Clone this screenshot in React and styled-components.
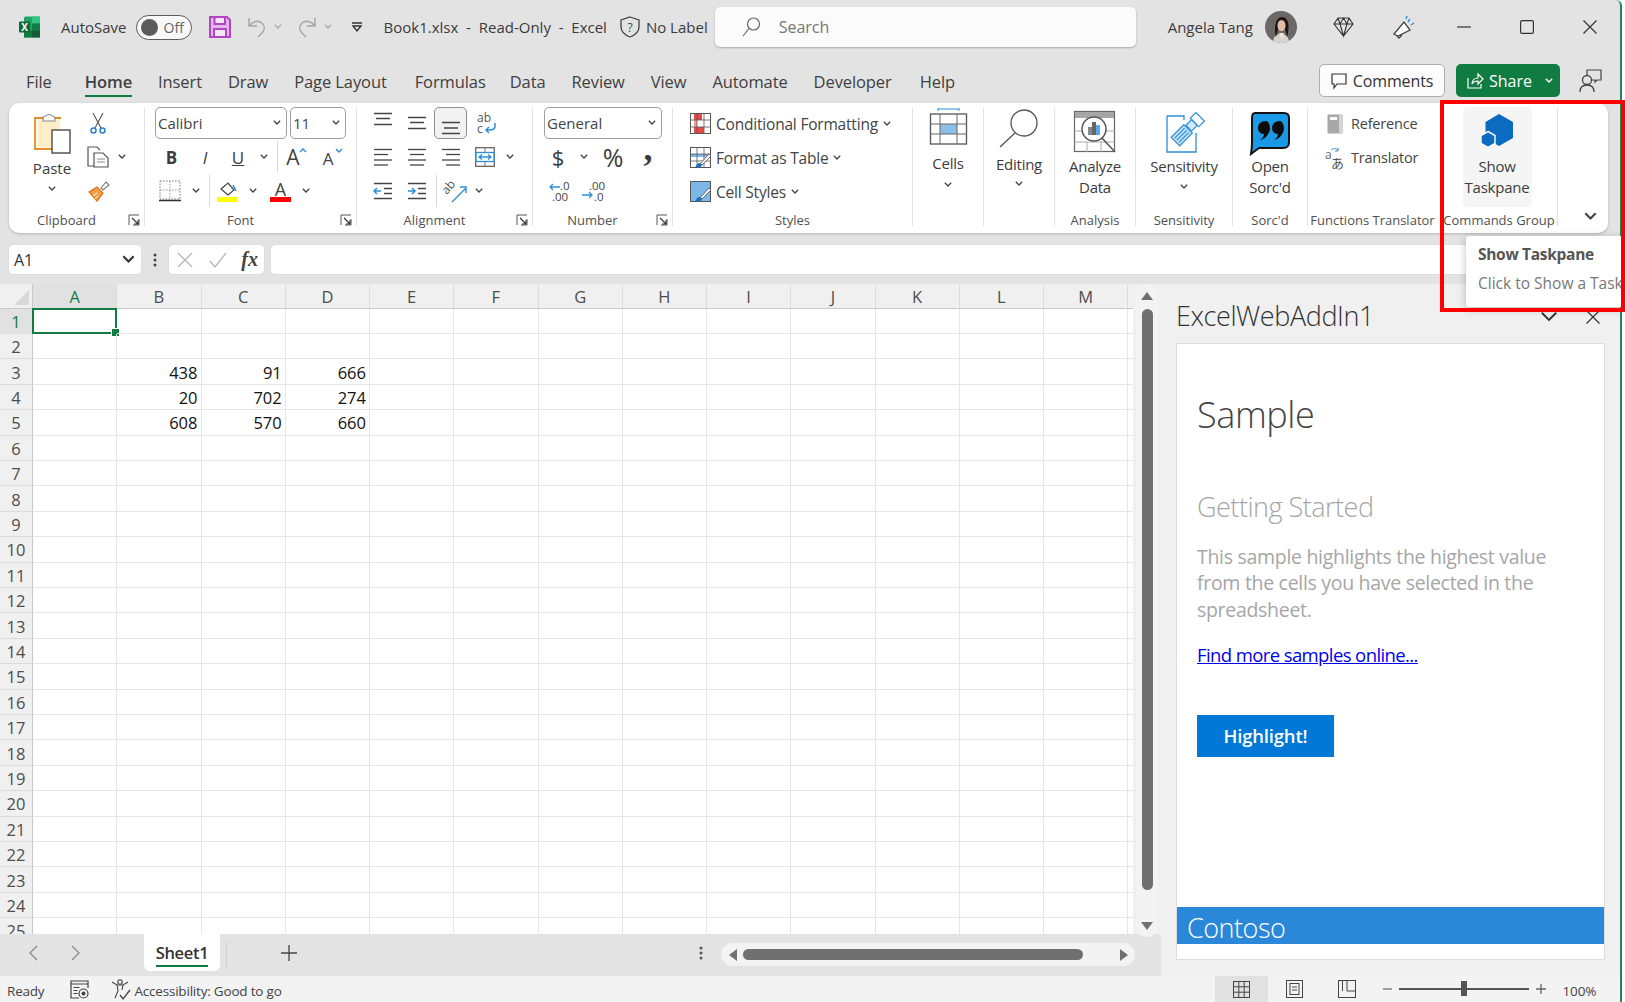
import React from "react";
import styled, { createGlobalStyle } from "styled-components";

const FONT = `"Open Sans", "Noto Sans", sans-serif`;

const GlobalStyle = createGlobalStyle`
  html, body { margin: 0; padding: 0; background: #fff; }
  body { font-family: ${FONT}; color: #333; overflow: hidden; }
  * { box-sizing: border-box; }
  svg { display: block; flex: none; overflow: visible; }
`;

const Page = styled.div`
  position: relative;
  width: 1625px;
  height: 1002px;
  overflow: hidden;
`;

const Window = styled.div`
  width: 1622px;
  height: 1002px;
  background: #e3e3e3;
  border-right: 2px solid #1f8a55;
  border-top-right-radius: 6px;
  display: flex;
  flex-direction: column;
`;

/* ---------- title bar ---------- */
const TitleBar = styled.div`
  height: 54px;
  display: flex;
  align-items: center;
  padding-left: 19px;
  font-size: 15px;
  color: #3b3b3b;
  white-space: pre;
`;

const Gap = styled.div`
  flex: none;
  width: ${p => p.$w}px;
`;

const Toggle = styled.div`
  width: 56px;
  height: 25px;
  border: 1.5px solid #5a5a5a;
  border-radius: 13px;
  background: #f8f8f8;
  display: flex;
  align-items: center;
  padding-left: 4px;
  gap: 6px;
  font-size: 14px;
  color: #666;
  &::before {
    content: "";
    width: 17px;
    height: 17px;
    border-radius: 50%;
    background: #5c5c5c;
  }
`;

const SearchBox = styled.div`
  width: 421px;
  height: 40px;
  margin-top: -1px;
  background: #fbfbfb;
  border-radius: 5px;
  box-shadow: 0 1px 2px rgba(0, 0, 0, 0.25);
  display: flex;
  align-items: center;
  padding-left: 27px;
  gap: 18px;
  font-size: 16px;
  color: #777;
`;

/* ---------- tabs ---------- */
const TabRow = styled.div`
  height: 49px;
  display: flex;
  align-items: flex-start;
  padding: 10px 19px 0 26px;
`;

const Tab = styled.div`
  height: 33px;
  margin-right: ${p => p.$mr ?? 26}px;
  font-size: 16.5px;
  letter-spacing: -0.1px;
  line-height: 36px;
  color: #404040;
  font-weight: ${p => (p.$active ? 600 : 400)};
  border-bottom: ${p => (p.$active ? "2.5px solid #107c41" : "none")};
`;

const TabActions = styled.div`
  margin-left: auto;
  display: flex;
  align-items: center;
  height: 33px;
`;

const CommentsBtn = styled.div`
  width: 126px;
  height: 33px;
  background: #fcfcfc;
  border: 1px solid #adadad;
  border-radius: 5px;
  display: flex;
  align-items: center;
  justify-content: center;
  gap: 6px;
  font-size: 16px;
  letter-spacing: -0.1px;
  color: #333;
`;

const ShareBtn = styled.div`
  width: 104px;
  height: 33px;
  margin: 0 19px 0 11px;
  background: #107c41;
  border-radius: 5px;
  display: flex;
  align-items: center;
  padding-left: 11px;
  gap: 6px;
  font-size: 16px;
  color: #fff;
`;

/* ---------- ribbon ---------- */
const Ribbon = styled.div`
  height: 130px;
  margin: 0 12px 0 9px;
  background: #fff;
  border-radius: 10px;
  box-shadow: 0 1px 3px rgba(0, 0, 0, 0.22);
  display: flex;
  flex: none;
`;

const Group = styled.div`
  position: relative;
  flex: none;
  width: ${p => p.$w}px;
  height: 118px;
  margin-top: 5px;
  border-right: ${p => (p.$plain ? "none" : "1px solid #e2e2e2")};
  display: flex;
  flex-direction: column;
`;

const GroupBody = styled.div`
  flex: 1;
  min-height: 0;
  margin-top: -1px;
  display: flex;
  flex-direction: ${p => p.$dir || "column"};
  gap: 2px;
  padding-left: ${p => p.$pl || 0}px;
`;

const GroupLabel = styled.div`
  height: 10px;
  line-height: 10px;
  margin-bottom: 1px;
  padding-right: ${p => p.$pr || 0}px;
  padding-left: ${p => p.$pleft || 0}px;
  text-align: center;
  font-size: 13px;
  color: #505050;
  white-space: nowrap;
`;

const Launcher = styled.div`
  position: absolute;
  right: 4px;
  bottom: 0;
`;

const ToolRow = styled.div`
  height: 32px;
  flex: none;
  display: flex;
  align-items: center;
  padding-left: ${p => p.$pl || 0}px;
`;

const Tool = styled.div`
  width: ${p => p.$w}px;
  height: 32px;
  flex: none;
  display: flex;
  align-items: center;
  justify-content: center;
  border-radius: 5px;
  font-size: ${p => p.$fs || 17}px;
  color: #3c3c3c;
  ${p => p.$on && "background: #f2f2f2; border: 1.5px solid #8f8f8f;"}
`;

const CommaMark = styled.span`
  font-family: "Liberation Serif", serif;
  font-weight: 700;
  font-size: 36px;
  line-height: 1;
  transform: translateY(-9px);
`;

const ToolSep = styled.div`
  width: 1px;
  height: 32px;
  flex: none;
  background: #d8d8d8;
  margin: 0 ${p => p.$mr || 0}px 0 ${p => p.$ml || 0}px;
`;

const Select = styled.div`
  width: ${p => p.$w}px;
  height: 32px;
  flex: none;
  margin-right: 3px;
  border: 1px solid #9e9e9e;
  border-radius: 5px;
  padding: 0 5px 0 2px;
  display: flex;
  align-items: center;
  justify-content: space-between;
  font-size: 15px;
  color: #444;
`;

const ClipCol = styled.div`
  display: flex;
  flex-direction: column;
  gap: 2px;
`;

const PasteBtn = styled.div`
  width: 66px;
  padding-top: 6px;
  display: flex;
  flex-direction: column;
  align-items: center;
  font-size: 15px;
  color: #3c3c3c;
  line-height: 20px;
`;

const PasteLabel = styled.div`
  margin: 4px 0 8px;
`;

const StyleRow = styled.div`
  height: 32px;
  flex: none;
  display: flex;
  align-items: center;
  padding: 1px 0 0 ${p => p.$pl || 17}px;
  gap: ${p => p.$gap || 5}px;
  font-size: ${p => p.$fs || 15.5}px;
  letter-spacing: -0.2px;
  color: #444;
  white-space: nowrap;
`;

const BigBtn = styled.div`
  width: ${p => p.$w || 70}px;
  height: ${p => (p.$h ? p.$h + "px" : "auto")};
  margin: 0 auto;
  padding-top: ${p => p.$pt ?? 4}px;
  display: flex;
  flex-direction: column;
  align-items: center;
  gap: ${p => p.$gap ?? 3}px;
  font-size: 15px;
  letter-spacing: -0.25px;
  line-height: 21px;
  color: #3c3c3c;
  text-align: center;
  border-radius: 5px;
  ${p => p.$hover && "background: #f5f5f5;"}
`;

const BtnChev = styled.div`
  margin-top: ${p => p.$mt || 0}px;
`;

const Collapse = styled.div`
  flex: 1;
  display: flex;
  align-items: flex-end;
  justify-content: center;
  padding: 0 0 13px 14px;
`;

/* ---------- formula bar ---------- */
const FormulaBar = styled.div`
  height: 29px;
  margin: 12px 10px 10px 9px;
  display: flex;
  align-items: stretch;
  flex: none;
`;

const FormulaBox = styled.div`
  background: #fff;
  border-radius: 4px;
  box-shadow: 0 0 1px rgba(0, 0, 0, 0.2);
  display: flex;
  align-items: center;
  flex: ${p => (p.$w ? "none" : "1")};
  width: ${p => (p.$w ? p.$w + "px" : "auto")};
  padding: ${p => p.$pad || "0"};
  justify-content: space-between;
  font-size: 16px;
  color: #333;
`;

const Kebab = styled.div`
  width: 28px;
  display: flex;
  align-items: center;
  justify-content: center;
`;

const FxMark = styled.span`
  font-family: "Liberation Serif", serif;
  font-style: italic;
  font-weight: 700;
  font-size: 20px;
  color: #444;
`;

/* ---------- workspace ---------- */
const Workspace = styled.div`
  flex: 1;
  min-height: 0;
  display: flex;
`;

const SheetArea = styled.div`
  width: 1161px;
  flex: none;
  display: flex;
  flex-direction: column;
`;

const SheetTop = styled.div`
  height: 650px;
  flex: none;
  display: flex;
  background: #f0f0f0;
`;

const GridWrap = styled.div`
  width: 1133px;
  overflow: hidden;
  background: #fff;
`;

const Grid = styled.div`
  display: grid;
  grid-template-columns: 33px repeat(14, 84.25px);
  grid-template-rows: 24.5px;
  grid-auto-rows: 25.42px;
  font-size: 16.5px;
`;

const CornerCell = styled.div`
  background: #f0f0f0;
  border-right: 1px solid #c9c9c9;
  border-bottom: 1px solid #c9c9c9;
  display: flex;
  align-items: flex-end;
  justify-content: flex-end;
  padding: 0 3px 3px 0;
  &::after {
    content: "";
    border-style: solid;
    border-width: 0 0 15px 15px;
    border-color: transparent transparent #d9d9d9 transparent;
  }
`;

const ColHead = styled.div`
  background: ${p => (p.$sel ? "#e1e1e1" : "#f0f0f0")};
  color: ${p => (p.$sel ? "#107c41" : "#4d4d4d")};
  border-right: 1px solid #dcdcdc;
  border-bottom: 1px solid #c9c9c9;
  padding-top: 1px;
  display: flex;
  align-items: center;
  justify-content: center;
`;

const RowHead = styled.div`
  background: ${p => (p.$sel ? "#e1e1e1" : "#f0f0f0")};
  color: ${p => (p.$sel ? "#107c41" : "#4d4d4d")};
  border-right: 1px solid #c9c9c9;
  border-bottom: 1px solid #dcdcdc;
  padding-top: 1px;
  display: flex;
  align-items: center;
  justify-content: center;
`;

const Cell = styled.div`
  position: relative;
  border-right: 1px solid #e6e6e6;
  border-bottom: 1px solid #e6e6e6;
  padding: 1px 3px 0 0;
  display: flex;
  align-items: center;
  justify-content: flex-end;
  color: #111;
`;

const Selection = styled.div`
  position: absolute;
  inset: -1px -1px -1px -1px;
  border: 2px solid #107c41;
  &::after {
    content: "";
    position: absolute;
    right: -4px;
    bottom: -4px;
    width: 7px;
    height: 7px;
    background: #107c41;
    outline: 1px solid #fff;
  }
`;

const VScroll = styled.div`
  width: 22px;
  margin-left: 3px;
  height: 653px;
  background: #f3f3f3;
  border-radius: 11px;
  flex: none;
  display: flex;
  flex-direction: column;
  align-items: center;
  padding: 7px 0 6px;
  z-index: 1;
`;

const VThumb = styled.div`
  width: 11px;
  height: 581px;
  margin: 8px 0 auto;
  background: #707070;
  border-radius: 6px;
`;

const TabBar = styled.div`
  height: 42px;
  flex: none;
  display: flex;
  align-items: flex-start;
  background: #e3e3e3;
`;

const NavBtn = styled.div`
  width: ${p => p.$w}px;
  height: 37px;
  flex: none;
  display: flex;
  align-items: center;
  justify-content: center;
`;

const SheetTab = styled.div`
  width: 76px;
  height: 37px;
  background: #fff;
  border-radius: 0 0 6px 6px;
  display: flex;
  justify-content: center;
  font-size: 16.5px;
  font-weight: 600;
  letter-spacing: -0.3px;
  color: #333;
  line-height: 37px;
`;

const SheetName = styled.div`
  height: 33px;
  border-bottom: 2.5px solid #107c41;
`;

const TabSep = styled.div`
  width: 1px;
  height: 26px;
  margin: 8px 0 0 6px;
  background: #cfcfcf;
`;

const HScroll = styled.div`
  width: 414px;
  height: 23px;
  margin: 9px 26px 0 auto;
  background: #f3f3f3;
  border-radius: 12px;
  display: flex;
  align-items: center;
  padding: 0 6px 0 7px;
`;

const HThumb = styled.div`
  width: 340px;
  height: 11px;
  margin: 0 auto 0 5px;
  background: #707070;
  border-radius: 6px;
`;

/* ---------- task pane ---------- */
const Pane = styled.div`
  flex: 1;
  background: #f0f0f0;
  display: flex;
  flex-direction: column;
  padding: 0 15px 16px;
`;

const PaneHead = styled.div`
  height: 59px;
  flex: none;
  display: flex;
  align-items: center;
  padding: 3px 5px 0 0;
`;

const PaneTitle = styled.div`
  flex: 1;
  font-size: 27px;
  font-weight: 300;
  letter-spacing: -0.4px;
  color: #333;
`;

const PaneIcons = styled.div`
  display: flex;
  align-items: center;
  gap: 28px;
  margin-top: 4px;
`;

const PaneBox = styled.div`
  flex: 1;
  background: #fff;
  border: 1px solid #dedede;
  display: flex;
  flex-direction: column;
`;

const PaneBody = styled.div`
  flex: 1;
  padding: 46px 20px 0;
`;

const Heading = styled.div`
  font-size: 36px;
  line-height: 50px;
  font-weight: 300;
  letter-spacing: -0.4px;
  color: #444;
`;

const SubHeading = styled.div`
  margin-top: 50px;
  font-size: 27px;
  line-height: 34px;
  font-weight: 300;
  letter-spacing: -0.5px;
  color: #a6a6a6;
`;

const Body = styled.div`
  margin-top: 20px;
  font-size: 19.5px;
  line-height: 26.3px;
  letter-spacing: -0.3px;
  color: #a6a6a6;
  width: 365px;
`;

const Link = styled.a`
  display: block;
  margin-top: 19px;
  font-size: 18.5px;
  line-height: 26px;
  letter-spacing: -0.6px;
  color: #0000ee;
  text-decoration: underline;
`;

const Action = styled.div`
  width: 137px;
  height: 42px;
  margin-top: 47px;
  background: #0078d7;
  color: #fff;
  font-size: 18.5px;
  font-weight: 600;
  letter-spacing: -0.2px;
  display: flex;
  align-items: center;
  justify-content: center;
`;

const Brand = styled.div`
  height: 37px;
  margin-bottom: 15px;
  padding-left: 10px;
  background: #2b88d8;
  color: #fff;
  font-size: 27px;
  font-weight: 300;
  letter-spacing: -0.5px;
  line-height: 42px;
`;

/* ---------- status bar ---------- */
const StatusBar = styled.div`
  height: 26px;
  flex: none;
  background: #f3f3f3;
  display: flex;
  align-items: center;
  padding-left: 7px;
  font-size: 13.5px;
  letter-spacing: -0.2px;
  color: #444;
`;

const StatusText = styled.span`
  padding-top: 3px;
`;

const ViewBtn = styled.div`
  width: ${p => p.$w || 53}px;
  height: 26px;
  flex: none;
  display: flex;
  align-items: center;
  justify-content: center;
  background: ${p => (p.$on ? "#e1e1e1" : "transparent")};
`;

const ZoomTrack = styled.div`
  position: relative;
  width: 130px;
  height: 1.5px;
  margin: 0 7px;
  background: #555;
`;

const ZoomThumb = styled.div`
  position: absolute;
  left: 62px;
  top: -7px;
  width: 6px;
  height: 15px;
  background: #555;
`;

/* ---------- overlays ---------- */
const Tooltip = styled.div`
  position: absolute;
  left: 1466px;
  top: 236px;
  width: 156px;
  height: 71px;
  padding: 4px 0 0 12px;
  background: #fff;
  border-radius: 3px 0 0 3px;
  box-shadow: 0 2px 8px rgba(0, 0, 0, 0.25);
  overflow: hidden;
  white-space: nowrap;
  font-size: 15.5px;
  line-height: 30px;
  color: #777;
`;

const TipTitle = styled.div`
  line-height: 28px;
  font-weight: 700;
  letter-spacing: -0.3px;
  color: #555;
`;

const RedFrame = styled.div`
  position: absolute;
  left: 1440px;
  top: 100px;
  width: 185px;
  height: 212px;
  border: 4px solid #ff0000;
  pointer-events: none;
`;

/* ---------- icons ---------- */
const Chev = ({ s = 8, c = "#444", w = 1.4 }) => (
  <svg width={s} height={s * 0.65} viewBox="0 0 10 6.5">
    <path d="M1 1l4 4 4-4" fill="none" stroke={c} strokeWidth={w * 1.2} />
  </svg>
);

const Svg = ({ w = 20, h = 20, children, ...rest }) => (
  <svg width={w} height={h} viewBox={`0 0 ${w} ${h}`} {...rest}>{children}</svg>
);

const ExcelLogo = () => (
  <Svg w={21} h={22}>
    <rect x="5" y="0.500" width="16" height="21" rx="1.500" fill="#21a366" />
    <rect x="13" y="0.500" width="8" height="7" fill="#33c481" />
    <rect x="13" y="7.500" width="8" height="7" fill="#107c41" />
    <rect x="13" y="14.500" width="8" height="7" fill="#185c37" />
    <rect x="5" y="14.500" width="8" height="7" fill="#107c41" />
    <rect x="0" y="5.500" width="11" height="11" rx="1" fill="#0e6b38" />
    <text x="5.500" y="14.500" textAnchor="middle" fontSize="10" fontWeight="700" fill="#fff" fontFamily="Open Sans">X</text>
  </Svg>
);

const SaveIcon = () => (
  <Svg w={22} h={22}>
    <path d="M1 1h17l3 3v17H1z" fill="#e7b5ee" stroke="#b146c2" strokeWidth="2" />
    <rect x="5.500" y="1" width="10.500" height="7" fill="#f7e3fa" stroke="#b146c2" strokeWidth="2" />
    <rect x="5" y="13" width="12" height="8" fill="#f7e3fa" stroke="#b146c2" strokeWidth="2" />
  </Svg>
);

const UndoIcon = ({ flip }) => (
  <Svg w={20} h={22} transform={flip ? "scale(-1 1)" : undefined}>
    <path d="M2 2v8h8M2.500 9.500C6 5 11 4 15 7c3 3 3 7 0 10l-4 4" fill="none" stroke="#a6a6a6" strokeWidth="1.500" />
  </Svg>
);

const QatIcon = () => (
  <Svg w={10} h={10}>
    <path d="M0 1h10" stroke="#333" strokeWidth="1.500" />
    <path d="M1 4h8L5 9z" fill="none" stroke="#333" strokeWidth="1.400" />
  </Svg>
);

const ShieldIcon = () => (
  <Svg w={20} h={22}>
    <path d="M10 1l9 3v7c0 5-4 8-9 10C5 19 1 16 1 11V4z" fill="none" stroke="#444" strokeWidth="1.300" />
    <text x="10" y="15.500" textAnchor="middle" fontSize="12" fill="#444" fontFamily="Open Sans">?</text>
  </Svg>
);

const SearchIcon = () => (
  <Svg w={19} h={20}>
    <circle cx="11.500" cy="7" r="6" fill="none" stroke="#666" strokeWidth="1.200" />
    <path d="M7 11.500L1 19" stroke="#666" strokeWidth="1.200" />
  </Svg>
);

const Avatar = () => (
  <Svg w={32} h={32}>
    <defs><clipPath id="av"><circle cx="16" cy="16" r="16" /></clipPath></defs>
    <g clipPath="url(#av)">
      <rect width="32" height="32" fill="#6b6866" />
      <path d="M8 32c0-6 3-9 8-9s8 3 8 9z" fill="#d9d4cc" />
      <path d="M11 26c-2-8-1-20 6-20s8 10 5 20l-2-8h-7z" fill="#1d1614" />
      <ellipse cx="16.500" cy="14.500" rx="4" ry="5.500" fill="#e5bda4" />
      <path d="M14 22h5l-2 6z" fill="#f1e6df" />
    </g>
  </Svg>
);

const DiamondIcon = () => (
  <Svg w={21} h={20}>
    <path d="M5 1h11l4 6-9.500 12L1 7zM1 7h19M7 7l3.500 12L14 7M5 1l2 6 3.500-6 3.500 6 2-6" fill="none" stroke="#333" strokeWidth="1.100" />
  </Svg>
);

const MegaIcon = () => (
  <Svg w={22} h={23}>
    <path d="M2 18L12 6l6 8-12 6zM5 20l2 2 3-3" fill="#fff" stroke="#444" strokeWidth="1.300" />
    <path d="M16 6l2-3M19 9l3-2M14 3l1-3" stroke="#2e8fd6" strokeWidth="1.400" />
  </Svg>
);

const CloseIcon = ({ s = 14, w = 1.2, c = "#333" }) => (
  <Svg w={s} h={s}>
    <path d={`M0.500 0.500L${s - 0.5} ${s - 0.5}M${s - 0.5} 0.500L0.500 ${s - 0.5}`} stroke={c} strokeWidth={w} />
  </Svg>
);

const CommentIcon = () => (
  <Svg w={16} h={16}>
    <path d="M1 1h14v10H6l-3 4v-4H1z" fill="none" stroke="#333" strokeWidth="1.200" />
  </Svg>
);

const ShareIcon = () => (
  <Svg w={16} h={17}>
    <path d="M1 6v10h13v-4" fill="none" stroke="#fff" strokeWidth="1.200" />
    <path d="M5 12c0-4 3-6 6-6V2l5 5-5 5V9c-3 0-5 1-6 3z" fill="none" stroke="#fff" strokeWidth="1.200" />
  </Svg>
);

const CoauthIcon = () => (
  <Svg w={22} h={23}>
    <path d="M8 6V1h14v10h-4l-2 2v-2h-3" fill="none" stroke="#444" strokeWidth="1.200" />
    <circle cx="8" cy="11" r="4.500" fill="#e3e3e3" stroke="#444" strokeWidth="1.300" />
    <path d="M1 23c0-5 3-7 7-7s7 2 7 7" fill="none" stroke="#444" strokeWidth="1.300" />
  </Svg>
);

const PasteIcon = () => (
  <Svg w={37} h={41}>
    <path d="M27 5H1v31h17" fill="#fff6e0" stroke="#e88c2d" strokeWidth="1.800" />
    <rect x="4" y="8" width="22" height="26" fill="#fdeec6" />
    <path d="M9 5c0-2 2-2 3-2 1-2 5-2 6 0 1 0 3 0 3 2v3H9z" fill="#fff" stroke="#888" strokeWidth="1.100" />
    <rect x="18" y="17" width="18" height="23" fill="#fff" stroke="#555" strokeWidth="1.500" />
  </Svg>
);

const CutIcon = () => (
  <Svg w={16} h={22}>
    <path d="M3 1l8 15M13 1L5 16" stroke="#555" strokeWidth="1.100" />
    <circle cx="3.500" cy="18.500" r="2.500" fill="none" stroke="#2a80c9" strokeWidth="1.500" />
    <circle cx="12.500" cy="18.500" r="2.500" fill="none" stroke="#2a80c9" strokeWidth="1.500" />
  </Svg>
);

const CopyIcon = () => (
  <Svg w={22} h={22}>
    <path d="M7 20H1V1h9l3 3" fill="none" stroke="#555" strokeWidth="1.200" />
    <path d="M7 7h9l5 5v9H7z" fill="#fff" stroke="#555" strokeWidth="1.200" />
    <path d="M10 13h8M10 16h8" stroke="#888" strokeWidth="1" />
  </Svg>
);

const BrushIcon = () => (
  <Svg w={21} h={21}>
    <path d="M13 7l5-6 3 3-6 5z" fill="#fff" stroke="#777" strokeWidth="1.100" />
    <path d="M1 11l8-5 6 6-6 8z" fill="#f3a14c" stroke="#e0701a" strokeWidth="1.200" />
    <path d="M5 15l4-3M7 18l3-3" stroke="#fff" strokeWidth="1" />
  </Svg>
);

const LauncherIcon = () => (
  <Svg w={12} h={12}>
    <path d="M1 11V1h10M11 5v6H5" fill="none" stroke="#555" strokeWidth="1" />
    <path d="M4 4l6 6M10 6v4H6" fill="none" stroke="#333" strokeWidth="1.200" />
  </Svg>
);

const BorderIcon = () => (
  <Svg w={22} h={22}>
    <rect x="1" y="1" width="20" height="18" fill="none" stroke="#777" strokeWidth="1" strokeDasharray="1.500 1.500" />
    <path d="M11 1v18M1 10h20" stroke="#999" strokeWidth="1" strokeDasharray="1.500 1.500" />
    <path d="M0 20.500h22" stroke="#333" strokeWidth="1.500" />
  </Svg>
);

const FillIcon = () => (
  <Svg w={22} h={22}>
    <path d="M4 9l7-6 6 7-6 5z" fill="#fff" stroke="#444" strokeWidth="1.200" />
    <path d="M16 5l3 6" stroke="#2e8fd6" strokeWidth="1.600" />
    <rect x="0" y="17" width="21" height="5" fill="#ffff00" />
  </Svg>
);

const ColorA = () => (
  <Svg w={22} h={22}>
    <text x="10.500" y="15.500" textAnchor="middle" fontSize="18" fill="#444" fontFamily="Open Sans">A</text>
    <rect x="0" y="17" width="21" height="5" fill="#ff0000" />
  </Svg>
);

const GrowA = ({ down }) => (
  <Svg w={22} h={22}>
    <text x={down ? 7 : 8} y="19" textAnchor="middle" fontSize={down ? 17 : 21} fill="#444" fontFamily="Open Sans">A</text>
    <path d={down ? "M15 3l3 3 3-3" : "M15 6l3-3 3 3"} fill="none" stroke="#2e8fd6" strokeWidth="1.400" />
  </Svg>
);

const VAlign = ({ at }) => {
  const ys = { top: [6.5, 11.5, 17.5], mid: [10.5, 15.5, 21.5], bot: [15.5, 21, 26.5] }[at];
  return (
    <Svg w={20} h={32}>
      <path d={`M1 ${ys[0]}H19M3 ${ys[1]}H17M1 ${ys[2]}H19`} stroke="#444" strokeWidth="1.300" fill="none" />
    </Svg>
  );
};

const HAlign = ({ at }) => {
  const [a, b] = at === "left" ? [1, 15] : at === "right" ? [5, 19] : [3, 17];
  return (
    <Svg w={20} h={18}>
      {[1.5, 6.5, 12, 17].map((y, i) => (
        <path key={i} d={i % 2 ? `M${a} ${y}H${b}` : `M1 ${y}H19`} stroke="#444" strokeWidth="1.300" />
      ))}
    </Svg>
  );
};

const WrapIcon = () => (
  <Svg w={20} h={22}>
    <text x="0" y="10" fontSize="12" fill="#555" fontFamily="Open Sans">ab</text>
    <text x="0" y="21" fontSize="12" fill="#555" fontFamily="Open Sans">c</text>
    <path d="M18 11v3c0 4-3 4-9 4M12 15l-3 3 3 3" fill="none" stroke="#2e8fd6" strokeWidth="1.500" />
  </Svg>
);

const MergeIcon = () => (
  <Svg w={20} h={20}>
    <rect x="0.700" y="0.700" width="18.600" height="18.600" fill="#fff" stroke="#666" strokeWidth="1.300" />
    <path d="M10 1v4M10 15v4" stroke="#777" strokeWidth="1" />
    <rect x="1" y="5.500" width="18" height="9" fill="#fff" stroke="#2e8fd6" strokeWidth="1.300" />
    <path d="M4 10h12M7 7.500L4 10l3 2.500M13 7.500l3 2.500-3 2.500" fill="none" stroke="#2e8fd6" strokeWidth="1.300" />
  </Svg>
);

const IndentIcon = ({ out }) => (
  <Svg w={20} h={18}>
    <path d="M1 1.500h18M1 16.500h18M11 6.500h8M11 11.500h8" stroke="#444" strokeWidth="1.300" />
    <path d={out ? "M1 9h7M4 6L1 9l3 3" : "M1 9h7M5 6l3 3-3 3"} fill="none" stroke="#2e8fd6" strokeWidth="1.500" />
  </Svg>
);

const OrientIcon = () => (
  <Svg w={22} h={22}>
    <text x="2" y="15" fontSize="12" fill="#555" fontFamily="Open Sans" transform="rotate(-50 2 15)">ab</text>
    <path d="M7 22L21 8M15 7h6v6" fill="none" stroke="#2e8fd6" strokeWidth="1.400" />
  </Svg>
);

const DecIcon = ({ more }) => (
  <Svg w={22} h={22}>
    {more ? (
      <>
        <text x="7" y="10" fontSize="11.500" fill="#444" fontFamily="Open Sans">.00</text>
        <text x="12" y="21" fontSize="11.500" fill="#444" fontFamily="Open Sans">.0</text>
        <path d="M0 15h10M7 12l3 3-3 3" fill="none" stroke="#2e8fd6" strokeWidth="1.300" />
      </>
    ) : (
      <>
        <text x="11" y="10" fontSize="11.500" fill="#444" fontFamily="Open Sans">.0</text>
        <text x="3" y="21" fontSize="11.500" fill="#444" fontFamily="Open Sans">.00</text>
        <path d="M11 7H1M4 4L1 7l3 3" fill="none" stroke="#2e8fd6" strokeWidth="1.300" />
      </>
    )}
  </Svg>
);

const CfIcon = () => (
  <Svg w={21} h={21}>
    <rect x="0.500" y="0.500" width="20" height="20" fill="#fff" stroke="#555" strokeWidth="1" />
    <rect x="4" y="1" width="8" height="6" fill="#e84a4a" />
    <rect x="4" y="7" width="3" height="7" fill="#f59a9a" />
    <rect x="4" y="14" width="10" height="6" fill="#e84a4a" />
    <path d="M7 0.500v20M14 0.500v20M0.500 7h20M0.500 14h20" stroke="#555" strokeWidth="0.800" fill="none" />
  </Svg>
);

const FatIcon = ({ full }) => (
  <Svg w={21} h={21}>
    <rect x="0.500" y="0.500" width="20" height="20" fill="#fff" stroke="#555" strokeWidth="1" />
    <rect x="1" y={full ? 1 : 7} width="19" height={full ? 19 : 3} fill="#7db7e8" />
    {!full && <path d="M7 0.500v20M14 0.500v20M0.500 7h20M0.500 14h20" stroke="#555" strokeWidth="0.800" />}
    <path d="M10 17l9-10 2 2-9 9z" fill="#fff" stroke="#666" strokeWidth="1" />
    <path d="M5 20c2-1 1-4 5-4l2 2c0 2-3 3-7 2z" fill="#1a6fc4" />
  </Svg>
);

const CellsIcon = () => (
  <Svg w={37} h={37}>
    <path d="M8 1h21M8 0v3M29 0v3" stroke="#2e8fd6" strokeWidth="1" />
    <rect x="0.500" y="6" width="36" height="30" fill="#fff" stroke="#555" strokeWidth="1.300" />
    <rect x="10" y="16" width="17" height="10" fill="#8ac0ea" />
    <path d="M10 6v30M27 6v30M0.500 16h36M0.500 26h36" stroke="#666" strokeWidth="1" fill="none" />
  </Svg>
);

const EditingIcon = () => (
  <Svg w={40} h={40}>
    <circle cx="25" cy="15" r="13" fill="#fff" stroke="#555" strokeWidth="1.300" />
    <path d="M16 25L1 39" stroke="#555" strokeWidth="1.300" />
  </Svg>
);

const AnalyzeIcon = () => (
  <Svg w={42} h={42}>
    <rect x="0.500" y="0.500" width="40" height="40" fill="#fff" stroke="#666" strokeWidth="1.200" />
    <rect x="1" y="1" width="39" height="6" fill="#a6a6a6" />
    <path d="M0.500 20h40M0.500 31h40M13 31v10M27 31v10" stroke="#aaa" strokeWidth="1" />
    <circle cx="20" cy="18" r="12" fill="#fff" stroke="#555" strokeWidth="1.500" />
    <rect x="14" y="16" width="4" height="8" fill="#888" />
    <rect x="18" y="11" width="4" height="13" fill="#666" />
    <rect x="22" y="14" width="4" height="10" fill="#5aa9e6" />
    <path d="M28 27l13 14" stroke="#555" strokeWidth="1.500" />
  </Svg>
);

const SensitivityIcon = () => (
  <Svg w={36} h={42}>
    <path d="M1 5h17v4M30 22v19H1V5" fill="#fff" stroke="#2e8fd6" strokeWidth="1.300" />
    <g transform="rotate(45 20 20)" stroke="#2e8fd6" strokeWidth="1.200" fill="#fff">
      <rect x="14" y="0" width="12" height="8" />
      <rect x="16" y="8" width="8" height="8" fill="#2e8fd6" fillOpacity="0.200" />
      <rect x="14" y="17" width="12" height="18" fill="#bfe0f7" />
      <path d="M17 19v14M20 19v14M23 19v14" fill="none" />
    </g>
  </Svg>
);

const SorcdIcon = () => (
  <Svg w={42} h={44}>
    <path d="M6 2h29c4 0 5 2 5 5v24c0 5-2 6-6 6H10L2 43c1-6 1-9 1-12V7c0-3 1-5 3-5z" fill="#1a9ae6" stroke="#111" strokeWidth="2" />
    <path d="M17 10c-5 0-8 3-8 7s3 6 6 6c0 2-1 4-4 6 5-1 9-5 10-11 0-5-2-8-4-8zM31 10c-5 0-8 3-8 7s3 6 6 6c0 2-1 4-4 6 5-1 9-5 10-11 0-5-2-8-4-8z" fill="#0c0c0c" />
  </Svg>
);

const RefIcon = () => (
  <Svg w={16} h={20}>
    <rect x="0.500" y="0.500" width="15" height="19" rx="1" fill="#a8a8a8" />
    <rect x="12" y="1" width="3" height="18" fill="#d5d5d5" />
    <rect x="3" y="3" width="7" height="3" fill="#fff" />
  </Svg>
);

const TranslatorIcon = () => (
  <Svg w={21} h={22}>
    <text x="0" y="12" fontSize="12" fill="#666" fontFamily="Open Sans">a</text>
    <text x="6" y="21" fontSize="13" fill="#555" fontFamily="Noto Sans CJK JP">あ</text>
    <path d="M6 3c2-2 5-2 7 0M13 1v3h-3" fill="none" stroke="#2e8fd6" strokeWidth="1" />
  </Svg>
);

const CubesIcon = () => (
  <Svg w={32} h={34}>
    <path d="M18 0l14 8v16l-14 8-13.500-8V8z" fill="#0b6bc1" />
    <path d="M7 17.500l7 4v8l-7 4-7-4v-8z" fill="#0b6bc1" stroke="#f5f5f5" strokeWidth="1.500" />
  </Svg>
);

const FxCheck = ({ cross }) => (
  <Svg w={18} h={16}>
    <path d={cross ? "M2 1l14 14M16 1L2 15" : "M1 9l5 6L17 1"} fill="none" stroke="#b5b5b5" strokeWidth="1.300" />
  </Svg>
);

const KebabIcon = ({ c = "#444" }) => (
  <Svg w={4} h={14}>
    <circle cx="2" cy="2" r="1.500" fill={c} />
    <circle cx="2" cy="7" r="1.500" fill={c} />
    <circle cx="2" cy="12" r="1.500" fill={c} />
  </Svg>
);

const Arrow = ({ dir, c = "#707070" }) => {
  const d = { up: "M0 9L6 1l6 8z", down: "M0 1l6 8 6-8z", left: "M9 0L1 6l8 6z", right: "M1 0l8 6-8 6z" }[dir];
  const v = dir === "up" || dir === "down";
  return (
    <svg width={v ? 12 : 10} height={v ? 10 : 12} viewBox={v ? "0 0 12 10" : "0 0 10 12"}>
      <path d={d} fill={c} />
    </svg>
  );
};

const NavChev = ({ left }) => (
  <Svg w={9} h={16}>
    <path d={left ? "M8 1L1 8l7 7" : "M1 1l7 7-7 7"} fill="none" stroke="#8a8a8a" strokeWidth="1.300" />
  </Svg>
);

const PlusIcon = ({ s = 16, c = "#444" }) => (
  <Svg w={s} h={s}>
    <path d={`M${s / 2} 0v${s}M0 ${s / 2}h${s}`} stroke={c} strokeWidth="1.300" />
  </Svg>
);

const MacroIcon = () => (
  <Svg w={19} h={19}>
    <path d="M1 1h17v3H1zM1 4v14h8M18 4v4" fill="none" stroke="#444" strokeWidth="1.200" />
    <path d="M3.500 7.500h6M3.500 10.500h4M3.500 13.500h4" stroke="#444" strokeWidth="1" />
    <circle cx="13.500" cy="13.500" r="4.500" fill="none" stroke="#444" strokeWidth="1.200" />
    <circle cx="13.500" cy="13.500" r="2" fill="#444" />
  </Svg>
);

const AccessIcon = () => (
  <Svg w={20} h={21}>
    <circle cx="9" cy="3" r="2.200" fill="none" stroke="#444" strokeWidth="1.100" />
    <path d="M1 3l5 3h6l5-3M6 6l1 6-3 7M12 6l-1 5" fill="none" stroke="#444" strokeWidth="1.100" />
    <path d="M9 16l3 4 7-9" fill="none" stroke="#444" strokeWidth="1.300" />
  </Svg>
);

const GridViewIcon = () => (
  <Svg w={17} h={17}>
    <rect x="0.500" y="0.500" width="16" height="16" fill="none" stroke="#444" />
    <path d="M5.800 0v17M11.200 0v17M0 5.800h17M0 11.200h17" stroke="#444" />
  </Svg>
);

const PageViewIcon = () => (
  <Svg w={17} h={18}>
    <rect x="0.500" y="0.500" width="16" height="17" fill="none" stroke="#444" />
    <rect x="4" y="3.500" width="9" height="11" fill="none" stroke="#444" />
    <path d="M6 7h5M6 10h5" stroke="#444" />
  </Svg>
);

const BreakViewIcon = () => (
  <Svg w={18} h={18}>
    <rect x="0.500" y="0.500" width="17" height="17" fill="none" stroke="#444" />
    <path d="M4.500 0v11M9 0v11H18" fill="none" stroke="#444" />
  </Svg>
);

/* ---------- data ---------- */
const COLS = ["A", "B", "C", "D", "E", "F", "G", "H", "I", "J", "K", "L", "M", ""];
const DATA = {
  3: { B: 438, C: 91, D: 666 },
  4: { B: 20, C: 702, D: 274 },
  5: { B: 608, C: 570, D: 660 },
};
const ROWS = Array.from({ length: 25 }, (_, i) => i + 1);

function Sheet() {
  return (
    <GridWrap>
      <Grid>
        <CornerCell />
        {COLS.map((c, i) => <ColHead key={i} $sel={c === "A"}>{c}</ColHead>)}
        {ROWS.map(r => (
          <React.Fragment key={r}>
            <RowHead $sel={r === 1}>{r}</RowHead>
            {COLS.map((c, i) => (
              <Cell key={i}>
                {DATA[r] && DATA[r][c]}
                {r === 1 && c === "A" && <Selection />}
              </Cell>
            ))}
          </React.Fragment>
        ))}
      </Grid>
    </GridWrap>
  );
}

function RibbonBar() {
  return (
    <Ribbon>
      <Group $w={136}>
        <GroupBody $dir="row" $pl={10}>
          <PasteBtn>
            <PasteIcon />
            <PasteLabel>Paste</PasteLabel>
            <Chev />
          </PasteBtn>
          <ClipCol>
            <ToolRow><Tool $w={22}><CutIcon /></Tool></ToolRow>
            <ToolRow><Tool $w={22}><CopyIcon /></Tool><Tool $w={26}><Chev /></Tool></ToolRow>
            <ToolRow><Tool $w={22}><BrushIcon /></Tool></ToolRow>
          </ClipCol>
        </GroupBody>
        <GroupLabel $pr={20}>Clipboard</GroupLabel>
        <Launcher><LauncherIcon /></Launcher>
      </Group>

      <Group $w={212}>
        <GroupBody>
          <ToolRow $pl={10}>
            <Select $w={132}>Calibri<Chev /></Select>
            <Select $w={56}>11<Chev /></Select>
          </ToolRow>
          <ToolRow $pl={10}>
            <Tool $w={33}><b>B</b></Tool>
            <Tool $w={34}><i>I</i></Tool>
            <Tool $w={32}><u>U</u></Tool>
            <Tool $w={20}><Chev /></Tool>
            <ToolSep $ml={3} />
            <Tool $w={36}><GrowA /></Tool>
            <Tool $w={36}><GrowA down /></Tool>
          </ToolRow>
          <ToolRow $pl={9}>
            <Tool $w={32}><BorderIcon /></Tool>
            <Tool $w={20}><Chev /></Tool>
            <ToolSep $ml={3} $mr={2} />
            <Tool $w={32}><FillIcon /></Tool>
            <Tool $w={18}><Chev /></Tool>
            <Tool $w={3} />
            <Tool $w={32}><ColorA /></Tool>
            <Tool $w={18}><Chev /></Tool>
          </ToolRow>
        </GroupBody>
        <GroupLabel $pr={20}>Font</GroupLabel>
        <Launcher><LauncherIcon /></Launcher>
      </Group>

      <Group $w={176}>
        <GroupBody>
          <ToolRow $pl={9}>
            <Tool $w={34}><VAlign at="top" /></Tool>
            <Tool $w={34}><VAlign at="mid" /></Tool>
            <Tool $w={33} $on><VAlign at="bot" /></Tool>
            <Tool $w={3} />
            <Tool $w={34}><WrapIcon /></Tool>
          </ToolRow>
          <ToolRow $pl={9}>
            <Tool $w={34}><HAlign at="left" /></Tool>
            <Tool $w={34}><HAlign at="center" /></Tool>
            <Tool $w={34}><HAlign at="right" /></Tool>
            <Tool $w={34}><MergeIcon /></Tool>
            <Tool $w={16}><Chev /></Tool>
          </ToolRow>
          <ToolRow $pl={9}>
            <Tool $w={34}><IndentIcon out /></Tool>
            <Tool $w={34}><IndentIcon /></Tool>
            <ToolSep $ml={2} $mr={3} />
            <Tool $w={32}><OrientIcon /></Tool>
            <Tool $w={14}><Chev /></Tool>
          </ToolRow>
        </GroupBody>
        <GroupLabel $pr={20}>Alignment</GroupLabel>
        <Launcher><LauncherIcon /></Launcher>
      </Group>

      <Group $w={140}>
        <GroupBody>
          <ToolRow $pl={11}><Select $w={118}>General<Chev /></Select></ToolRow>
          <ToolRow $pl={11}>
            <Tool $w={28} $fs={22}>$</Tool>
            <Tool $w={2} />
            <Tool $w={20}><Chev /></Tool>
            <Tool $w={2} />
            <Tool $w={34} $fs={25}>%</Tool>
            <Tool $w={2} />
            <Tool $w={32}><CommaMark>,</CommaMark></Tool>
          </ToolRow>
          <ToolRow $pl={11}>
            <Tool $w={32}><DecIcon /></Tool>
            <Tool $w={1} />
            <Tool $w={32}><DecIcon more /></Tool>
          </ToolRow>
        </GroupBody>
        <GroupLabel $pr={20}>Number</GroupLabel>
        <Launcher><LauncherIcon /></Launcher>
      </Group>

      <Group $w={240}>
        <GroupBody>
          <StyleRow><CfIcon />Conditional Formatting<Chev /></StyleRow>
          <StyleRow><FatIcon />Format as Table<Chev /></StyleRow>
          <StyleRow><FatIcon full />Cell Styles<Chev /></StyleRow>
        </GroupBody>
        <GroupLabel>Styles</GroupLabel>
      </Group>

      <Group $w={71}>
        <GroupBody>
          <BigBtn $pt={1} $gap={8}><CellsIcon />Cells<Chev /></BigBtn>
        </GroupBody>
      </Group>

      <Group $w={71}>
        <GroupBody>
          <BigBtn $pt={1} $gap={6}><EditingIcon />Editing<Chev /></BigBtn>
        </GroupBody>
      </Group>

      <Group $w={81}>
        <GroupBody>
          <BigBtn $gap={3}><AnalyzeIcon /><div>Analyze<br />Data</div></BigBtn>
        </GroupBody>
        <GroupLabel>Analysis</GroupLabel>
      </Group>

      <Group $w={97}>
        <GroupBody>
          <BigBtn $w={90} $gap={3}><SensitivityIcon />Sensitivity<BtnChev $mt={4}><Chev /></BtnChev></BigBtn>
        </GroupBody>
        <GroupLabel>Sensitivity</GroupLabel>
      </Group>

      <Group $w={75}>
        <GroupBody>
          <BigBtn $gap={1}><SorcdIcon /><div>Open<br />Sorc'd</div></BigBtn>
        </GroupBody>
        <GroupLabel>Sorc'd</GroupLabel>
      </Group>

      <Group $w={129} $plain>
        <GroupBody>
          <StyleRow $fs={14.5} $pl={19} $gap={8}><RefIcon />Reference</StyleRow>
          <StyleRow $fs={14.5}><TranslatorIcon />Translator</StyleRow>
        </GroupBody>
        <GroupLabel>Functions Translator</GroupLabel>
      </Group>

      <Group $w={121}>
        <GroupBody>
          <BigBtn $w={69} $h={100} $pt={7} $gap={8} $hover><CubesIcon /><div>Show<br />Taskpane</div></BigBtn>
        </GroupBody>
        <GroupLabel $pleft={4}>Commands Group</GroupLabel>
      </Group>

      <Collapse><Chev s={13} /></Collapse>
    </Ribbon>
  );
}

export default function App() {
  return (
    <Page>
      <GlobalStyle />
      <Window>
        <TitleBar>
          <ExcelLogo />
          <Gap $w={21} />
          AutoSave
          <Gap $w={9} />
          <Toggle>Off</Toggle>
          <Gap $w={17} />
          <SaveIcon />
          <Gap $w={16} />
          <UndoIcon />
          <Gap $w={7} />
          <Chev c="#aaa" />
          <Gap $w={15} />
          <UndoIcon flip />
          <Gap $w={7} />
          <Chev c="#aaa" />
          <Gap $w={20} />
          <QatIcon />
          <Gap $w={22} />
          {"Book1.xlsx  -  Read-Only  -  Excel"}
          <Gap $w={13} />
          <ShieldIcon />
          <Gap $w={6} />
          No Label
          <Gap $w={7} />
          <SearchBox><SearchIcon />Search</SearchBox>
          <Gap $w={32} />
          Angela Tang
          <Gap $w={12} />
          <Avatar />
          <Gap $w={36} />
          <DiamondIcon />
          <Gap $w={38} />
          <MegaIcon />
          <Gap $w={43} />
          <Svg w={14} h={2}><path d="M0 1h14" stroke="#333" strokeWidth="1.200" /></Svg>
          <Gap $w={49} />
          <Svg w={14} h={14}><rect x="0.600" y="0.600" width="12.800" height="12.800" rx="1.500" fill="none" stroke="#333" strokeWidth="1.200" /></Svg>
          <Gap $w={49} />
          <CloseIcon />
        </TitleBar>

        <TabRow>
          <Tab $mr={33}>File</Tab>
          <Tab $active $mr={26}>Home</Tab>
          <Tab>Insert</Tab>
          <Tab>Draw</Tab>
          <Tab $mr={28}>Page Layout</Tab>
          <Tab $mr={24}>Formulas</Tab>
          <Tab>Data</Tab>
          <Tab>Review</Tab>
          <Tab>View</Tab>
          <Tab>Automate</Tab>
          <Tab $mr={28}>Developer</Tab>
          <Tab>Help</Tab>
          <TabActions>
            <CommentsBtn><CommentIcon />Comments</CommentsBtn>
            <ShareBtn><ShareIcon />Share<Gap $w={1} /><Chev c="#fff" /></ShareBtn>
            <CoauthIcon />
          </TabActions>
        </TabRow>

        <RibbonBar />

        <FormulaBar>
          <FormulaBox $w={132} $pad="0 6px 0 5px">A1<Chev s={13} c="#333" /></FormulaBox>
          <Kebab><KebabIcon /></Kebab>
          <FormulaBox $w={95} $pad="0 6px 0 7px"><FxCheck cross /><FxCheck /><FxMark>fx</FxMark></FormulaBox>
          <Gap $w={7} />
          <FormulaBox />
        </FormulaBar>

        <Workspace>
          <SheetArea>
            <SheetTop>
              <Sheet />
              <VScroll>
                <Arrow dir="up" />
                <VThumb />
                <Arrow dir="down" />
              </VScroll>
            </SheetTop>
            <TabBar>
              <NavBtn $w={66}><NavChev left /></NavBtn>
              <NavBtn $w={18}><NavChev /></NavBtn>
              <NavBtn $w={60} />
              <SheetTab><SheetName>Sheet1</SheetName></SheetTab>
              <TabSep />
              <NavBtn $w={124}><PlusIcon /></NavBtn>
              <Gap $w={345} />
              <NavBtn $w={9}><KebabIcon c="#555" /></NavBtn>
              <HScroll>
                <Arrow dir="left" />
                <HThumb />
                <Arrow dir="right" />
              </HScroll>
            </TabBar>
          </SheetArea>

          <Pane>
            <PaneHead>
              <PaneTitle>ExcelWebAddIn1</PaneTitle>
              <PaneIcons>
                <Chev s={18} c="#333" w={0.9} />
                <CloseIcon s={14} />
              </PaneIcons>
            </PaneHead>
            <PaneBox>
              <PaneBody>
                <Heading>Sample</Heading>
                <SubHeading>Getting Started</SubHeading>
                <Body>This sample highlights the highest value from the cells you have selected in the spreadsheet.</Body>
                <Link href="#">Find more samples online...</Link>
                <Action>Highlight!</Action>
              </PaneBody>
              <Brand>Contoso</Brand>
            </PaneBox>
          </Pane>
        </Workspace>

        <StatusBar>
          <StatusText>Ready</StatusText>
          <Gap $w={26} />
          <MacroIcon />
          <Gap $w={22} />
          <AccessIcon />
          <Gap $w={3} />
          <StatusText>Accessibility: Good to go</StatusText>
          <Gap $w={933} />
          <ViewBtn $on><GridViewIcon /></ViewBtn>
          <ViewBtn><PageViewIcon /></ViewBtn>
          <ViewBtn $w={52}><BreakViewIcon /></ViewBtn>
          <Gap $w={10} />
          <Svg w={9} h={2}><path d="M0 1h9" stroke="#666" strokeWidth="1.200" /></Svg>
          <ZoomTrack><ZoomThumb /></ZoomTrack>
          <PlusIcon s={10} c="#666" />
          <Gap $w={17} />
          <StatusText>100%</StatusText>
        </StatusBar>
      </Window>

      <Tooltip>
        <TipTitle>Show Taskpane</TipTitle>
        Click to Show a Taskpane
      </Tooltip>
      <RedFrame />
    </Page>
  );
}
